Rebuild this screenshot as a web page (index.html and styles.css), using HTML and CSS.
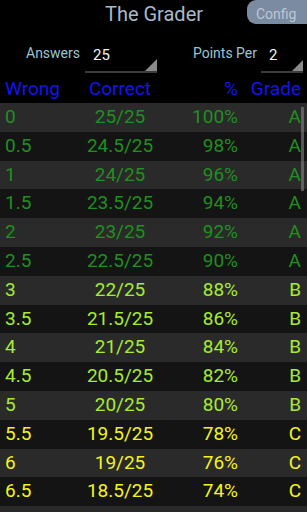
FILE: index.html
```html
<!DOCTYPE html>
<html>
<head>
<meta charset="utf-8">
<link rel="stylesheet" href="styles.css">
</head>
<body>
<div class="app">
  <div class="topbar">
    <div></div>
    <div class="title">The Grader</div>
    <div class="config">Config</div>
  </div>
  <div class="inputs">
    <div class="group">
      <span class="label">Answers</span>
      <span class="spinner sp-wide">25</span>
    </div>
    <div class="group group-right">
      <span class="label">Points Per</span>
      <span class="spinner sp-narrow">2</span>
    </div>
  </div>
  <div class="table">
    <div class="row head"><span>Wrong</span><span class="c">Correct</span><span class="r">%</span><span class="r">Grade</span></div>
    <div class="rows">
      <div class="row light ga"><span>0</span><span class="c">25/25</span><span class="r">100%</span><span class="r">A</span></div>
      <div class="row dark ga"><span>0.5</span><span class="c">24.5/25</span><span class="r">98%</span><span class="r">A</span></div>
      <div class="row light ga"><span>1</span><span class="c">24/25</span><span class="r">96%</span><span class="r">A</span></div>
      <div class="row dark ga"><span>1.5</span><span class="c">23.5/25</span><span class="r">94%</span><span class="r">A</span></div>
      <div class="row light ga"><span>2</span><span class="c">23/25</span><span class="r">92%</span><span class="r">A</span></div>
      <div class="row dark ga"><span>2.5</span><span class="c">22.5/25</span><span class="r">90%</span><span class="r">A</span></div>
      <div class="row light gb"><span>3</span><span class="c">22/25</span><span class="r">88%</span><span class="r">B</span></div>
      <div class="row dark gb"><span>3.5</span><span class="c">21.5/25</span><span class="r">86%</span><span class="r">B</span></div>
      <div class="row light gb"><span>4</span><span class="c">21/25</span><span class="r">84%</span><span class="r">B</span></div>
      <div class="row dark gb"><span>4.5</span><span class="c">20.5/25</span><span class="r">82%</span><span class="r">B</span></div>
      <div class="row light gb"><span>5</span><span class="c">20/25</span><span class="r">80%</span><span class="r">B</span></div>
      <div class="row dark gc"><span>5.5</span><span class="c">19.5/25</span><span class="r">78%</span><span class="r">C</span></div>
      <div class="row light gc"><span>6</span><span class="c">19/25</span><span class="r">76%</span><span class="r">C</span></div>
      <div class="row dark gc"><span>6.5</span><span class="c">18.5/25</span><span class="r">74%</span><span class="r">C</span></div>
      <div class="row light gc"></div>
      <div class="scrollbar"></div>
    </div>
  </div>
</div>
</body>
</html>
```

FILE: styles.css
```css
html, body {
  margin: 0;
  padding: 0;
  background: #000;
  height: 512px;
  overflow: hidden;
}
.app {
  width: 307px;
  font-family: Roboto, "Liberation Sans", sans-serif;
}
.topbar {
  display: grid;
  grid-template-columns: 1fr auto 1fr;
  height: 28px;
}
.title {
  font-size: 20px;
  line-height: 28px;
  color: #a9b9cc;
  padding-left: 1px;
}
.config {
  justify-self: end;
  align-self: start;
  width: 60px;
  height: 24px;
  box-sizing: border-box;
  padding: 4px 0 0 9px;
  font-size: 14px;
  line-height: 20px;
  color: #bcc6d4;
  background: #7b8ba2;
  border-radius: 9px 0 0 9px;
}
.inputs {
  display: flex;
  height: 47px;
  padding: 0 4px 0 26px;
}
.group {
  display: flex;
  align-items: flex-start;
  gap: 5px;
}
.group-right {
  margin-left: auto;
  gap: 4px;
}
.label {
  margin-top: 15px;
  font-size: 14px;
  line-height: 20px;
  color: #9ac4d4;
}
.spinner {
  position: relative;
  margin-top: 12px;
  height: 33px;
  box-sizing: border-box;
  padding: 5px 0 0 8px;
  font-size: 15px;
  line-height: 20px;
  color: #f2f2f2;
  border-bottom: 2px solid #3c3c3c;
}
.spinner::after {
  content: "";
  position: absolute;
  right: 0;
  bottom: 0;
  width: 0;
  height: 0;
  border-left: 12px solid transparent;
  border-bottom: 12px solid #8a8a8a;
}
.sp-wide { width: 72px; }
.sp-narrow { width: 42px; }
.sp-narrow::after { border-left-width: 11px; border-bottom-width: 11px; }
.table {
  font-size: 19px;
}
.rows {
  position: relative;
}
.row {
  display: grid;
  grid-template-columns: 67px 96px 70px 1fr;
  padding: 0 6px 0 5px;
  box-sizing: border-box;
  width: 307px;
  height: 28.8px;
  line-height: 28.8px;
  white-space: nowrap;
}
.row .c { text-align: center; }
.row .r { text-align: right; }
.head {
  height: 28px;
  line-height: 28px;
  color: #1414f0;
  background: #000;
}
.light { background: #2a2a2a; }
.dark { background: #141414; }
.ga { color: #1f8f1f; }
.gb { color: #a6ec30; }
.gc { color: #f4f41c; }
.scrollbar {
  position: absolute;
  left: 301px;
  top: 4px;
  width: 3px;
  height: 84px;
  background: rgba(140, 140, 140, 0.55);
}
```
